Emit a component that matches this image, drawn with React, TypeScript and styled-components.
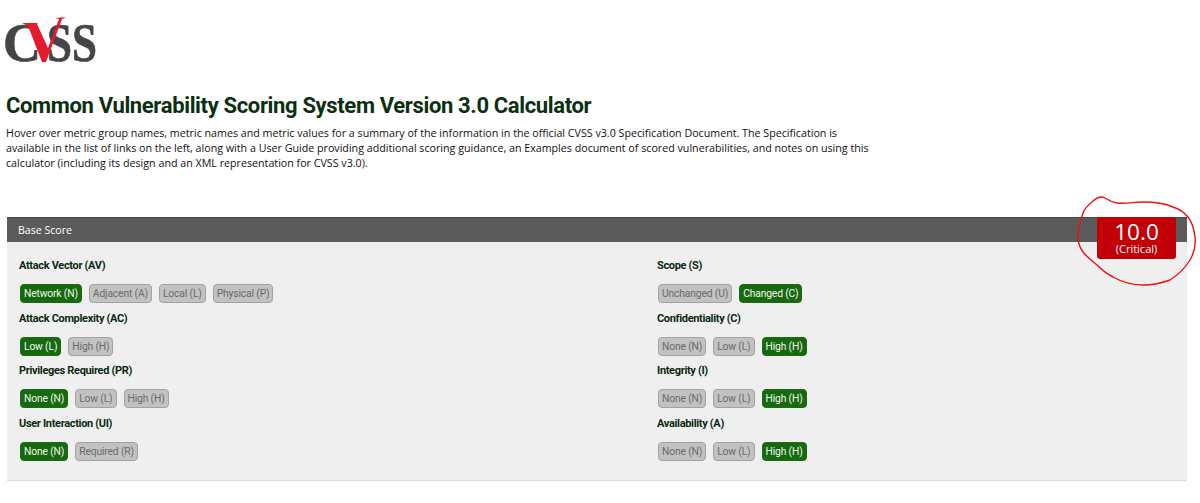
import * as React from 'react'
import styled, { createGlobalStyle } from 'styled-components'

interface MetricData {
  name: string
  values: string[]
  selected: number
}

const leftMetrics: MetricData[] = [
  { name: 'Attack Vector (AV)', values: ['Network (N)', 'Adjacent (A)', 'Local (L)', 'Physical (P)'], selected: 0 },
  { name: 'Attack Complexity (AC)', values: ['Low (L)', 'High (H)'], selected: 0 },
  { name: 'Privileges Required (PR)', values: ['None (N)', 'Low (L)', 'High (H)'], selected: 0 },
  { name: 'User Interaction (UI)', values: ['None (N)', 'Required (R)'], selected: 0 },
]

const rightMetrics: MetricData[] = [
  { name: 'Scope (S)', values: ['Unchanged (U)', 'Changed (C)'], selected: 1 },
  { name: 'Confidentiality (C)', values: ['None (N)', 'Low (L)', 'High (H)'], selected: 2 },
  { name: 'Integrity (I)', values: ['None (N)', 'Low (L)', 'High (H)'], selected: 2 },
  { name: 'Availability (A)', values: ['None (N)', 'Low (L)', 'High (H)'], selected: 2 },
]

const GlobalStyle = createGlobalStyle`
  html, body {
    margin: 0;
    background: #fff;
  }
  body {
    font-family: "Open Sans", "Noto Sans", sans-serif;
    color: #111;
  }
`

const Page = styled.div`
  position: relative;
  width: 1200px;
  height: 503px;
  overflow: hidden;
  padding: 11px 13px 0 6px;
  box-sizing: border-box;
`

const Logo = styled.svg`
  display: block;
  width: 108px;
  height: 64px;
  margin-left: -4px;
`

const Title = styled.h1`
  margin: 17px 0 0;
  font-family: Roboto, "Noto Sans", sans-serif;
  font-size: 22px;
  line-height: 28px;
  font-weight: 700;
  letter-spacing: -0.35px;
  color: #0a3010;
  white-space: nowrap;
`

const Intro = styled.p`
  margin: 6px 0 0;
  width: 870px;
  font-size: 10.7px;
  line-height: 15px;
  color: #111;
`

const Panel = styled.section`
  position: relative;
  margin: 46px 0 0 1px;
`

const PanelHeader = styled.div`
  height: 24px;
  line-height: 25px;
  padding-left: 11px;
  background: #5b5b5b;
  border-top: 1px solid #474747;
  color: #fff;
  font-size: 10.6px;
`

const PanelBody = styled.div`
  display: grid;
  grid-template-columns: 638px 1fr;
  height: 239px;
  padding: 15px 0 0 12px;
  box-sizing: border-box;
  background: #efefef;
  border-bottom: 1px solid #dcdcdc;
`

const Column = styled.div`
  display: flex;
  flex-direction: column;
`

const MetricBlock = styled.div`
  height: 52.5px;
`

const MetricName = styled.h3`
  margin: 0;
  height: 17px;
  font-family: Roboto, "Noto Sans", sans-serif;
  font-size: 11px;
  line-height: 17px;
  font-weight: 700;
  letter-spacing: -0.33px;
  color: #0a2a10;
`

const ValueRow = styled.div`
  display: flex;
  gap: 7px;
  margin: 10px 0 0 1px;
`

const ValueButton = styled.span<{ $active: boolean }>`
  display: block;
  height: 19px;
  line-height: 17px;
  padding: 0 3px;
  box-sizing: border-box;
  border-radius: 4px;
  font-family: Roboto, "Noto Sans", sans-serif;
  font-size: 10.3px;
  letter-spacing: -0.15px;
  white-space: nowrap;
  border: 1px solid ${p => (p.$active ? '#1a6d12' : '#a3a3a3')};
  background: ${p => (p.$active ? '#16690f' : '#c2c2c2')};
  color: ${p => (p.$active ? '#f2f7ee' : '#6b6b6b')};
`

const ScoreBox = styled.div`
  position: absolute;
  top: 0;
  right: 11px;
  width: 79px;
  height: 42px;
  border-radius: 3px;
  background: #c10008;
  color: #fff;
  text-align: center;
`

const ScoreValue = styled.div`
  font-size: 22.5px;
  line-height: 23px;
  padding-top: 3px;
`

const ScoreLabel = styled.div`
  font-size: 11px;
  line-height: 12px;
`

const Scribble = styled.svg`
  position: absolute;
  left: 1060px;
  top: 180px;
  width: 140px;
  height: 120px;
  pointer-events: none;
`

const Metric: React.FC<MetricData> = ({ name, values, selected }) => (
  <MetricBlock>
    <MetricName>{name}</MetricName>
    <ValueRow>
      {values.map((value, i) => (
        <ValueButton key={value} $active={i === selected}>
          {value}
        </ValueButton>
      ))}
    </ValueRow>
  </MetricBlock>
)

const CvssLogo: React.FC = () => (
  <Logo viewBox="-4 -4 108 64">
    <text x="-3" y="46" fontFamily="Liberation Serif" fontWeight="700" fontSize="54" fill="#454547" stroke="#454547" strokeWidth="0.7" textLength="38" lengthAdjust="spacingAndGlyphs">
      C
    </text>
    <text x="41" y="46" fontFamily="Liberation Serif" fontWeight="700" fontSize="54" fill="#454547" stroke="#454547" strokeWidth="0.7" textLength="50" lengthAdjust="spacingAndGlyphs">
      SS
    </text>
    <polygon points="16,8 32,8 31,9 42,33 53,4 49,3 60,2 56,4 40,47 36,47 22,11" fill="#e31b2c" />
  </Logo>
)

export default function App() {
  return (
    <Page>
      <GlobalStyle />
      <CvssLogo />
      <Title>Common Vulnerability Scoring System Version 3.0 Calculator</Title>
      <Intro>
        Hover over metric group names, metric names and metric values for a summary of the information in the official
        CVSS v3.0 Specification Document. The Specification is available in the list of links on the left, along with a
        User Guide providing additional scoring guidance, an Examples document of scored vulnerabilities, and notes on
        using this calculator (including its design and an XML representation for CVSS v3.0).
      </Intro>
      <Panel>
        <PanelHeader>Base Score</PanelHeader>
        <PanelBody>
          <Column>
            {leftMetrics.map(m => (
              <Metric key={m.name} {...m} />
            ))}
          </Column>
          <Column>
            {rightMetrics.map(m => (
              <Metric key={m.name} {...m} />
            ))}
          </Column>
        </PanelBody>
        <ScoreBox>
          <ScoreValue>10.0</ScoreValue>
          <ScoreLabel>(Critical)</ScoreLabel>
        </ScoreBox>
      </Panel>
      <Scribble viewBox="0 0 140 120">
        <path
          d="M45 18 C40 15 35 19 32 22 C27 26 24 30 23 33 C20 42 18 50 18 57 C18 63 20 68 23 72 C27 77 32 81 37 85 C42 90 47 94 53 97 C62 102 72 105 83 105 C93 105 102 103 110 100 C118 95 125 88 130 80 C134 73 136 65 135 57 C134 49 132 42 128 37 C124 32 119 29 113 27 C104 23 93 22 83 22 C74 22 65 24 57 23 C52 22 48 20 45 18"
          fill="none"
          stroke="#f01010"
          strokeWidth="1.4"
        />
      </Scribble>
    </Page>
  )
}
